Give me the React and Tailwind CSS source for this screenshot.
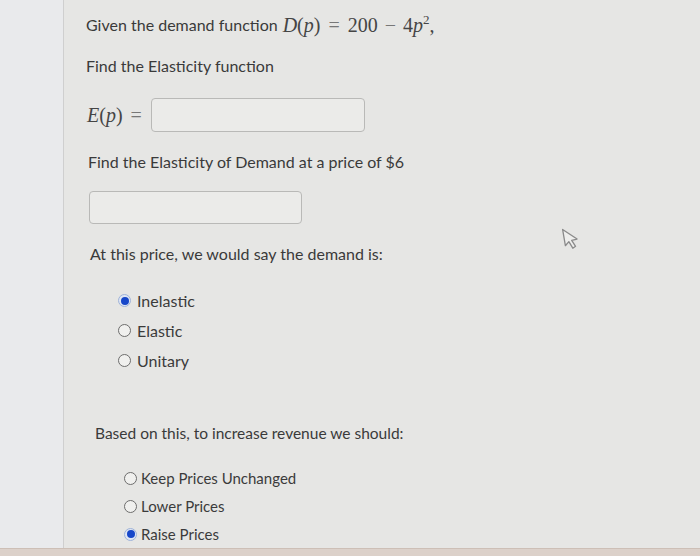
const sans = { fontFamily: 'Lato, "Open Sans", sans-serif' }

function Radio({ checked }) {
  if (checked) {
    return (
      <span className="w-[13px] h-[13px] rounded-full border border-[#9fb3d9] bg-[#dfe6f3] flex items-center justify-center shrink-0">
        <span className="w-[8px] h-[8px] rounded-full bg-[#1747c9]" />
      </span>
    )
  }
  return <span className="w-[13px] h-[13px] rounded-full border-[1.5px] border-[#6d6d6d] bg-[#f0f0ee] shrink-0" />
}

function Option({ checked, label, className }) {
  return (
    <div className={`flex items-center ${className}`}>
      <Radio checked={checked} />
      <span className="text-[#3b3b3b]">{label}</span>
    </div>
  )
}

function M({ children }) {
  return <span className="font-['Liberation_Serif',serif] italic">{children}</span>
}

function N({ children, className = '' }) {
  return <span className={`font-['Liberation_Serif',serif] ${className}`}>{children}</span>
}

export default function App() {
  return (
    <div className="w-[700px] h-[556px] flex flex-col bg-[#e6e6e4] overflow-hidden relative" style={sans}>
      <div className="flex flex-1 min-h-0">
        <div className="w-[64px] bg-[#e9eaec] border-r border-[#cfcfcf]" />
        <div className="flex-1 flex flex-col pl-[22px] text-[#3a3a3a] overflow-hidden">
          <div className="mt-[13px] h-[24px] flex items-center text-[16px]">
            <span className="mr-[5px]">Given the demand function</span>
            <span className="text-[20px] text-[#454545] flex items-baseline">
              <M>D</M><N>(</N><M>p</M><N>)</N>
              <N className="mx-[8px] text-[#777]">=</N>
              <N>200</N>
              <N className="mx-[7px] text-[#777]">−</N>
              <N>4</N><M>p</M>
              <sup className="text-[13px] font-['Liberation_Serif',serif] -top-[8px]">2</sup>
              <N>,</N>
            </span>
          </div>
          <div className="mt-[17px] h-[24px] flex items-center text-[16px]">Find the Elasticity function</div>
          <div className="mt-[20px] flex items-center ml-[1px] h-[34px]">
            <span className="text-[20px] text-[#454545] w-[64px] flex items-baseline">
              <M>E</M><N>(</N><M>p</M><N>)</N><N className="ml-[8px] text-[#777]">=</N>
            </span>
            <div className="w-[214px] h-[34px] rounded-[4px] border-[1.5px] border-[#b9b9b7] bg-[#ebebe9]" />
          </div>
          <div className="mt-[18px] h-[24px] flex items-center text-[16px] ml-[2px]">Find the Elasticity of Demand at a price of $6</div>
          <div className="mt-[17px] ml-[3px] w-[213px] h-[34px] rounded-[4px] border-[1.5px] border-[#b9b9b7] bg-[#ebebe9]" />
          <div className="mt-[18px] h-[24px] flex items-center text-[16px] ml-[4px]">At this price, we would say the demand is:</div>
          <div className="mt-[20px] flex flex-col ml-[32px] text-[16px]">
            <Option className="h-[30px] gap-[6px]" checked label="Inelastic" />
            <Option className="h-[30px] gap-[6px]" label="Elastic" />
            <Option className="h-[30px] gap-[6px]" label="Unitary" />
          </div>
          <div className="mt-[46px] h-[24px] flex items-center text-[15.5px] ml-[9px]">Based on this, to increase revenue we should:</div>
          <div className="mt-[19px] flex flex-col ml-[38px] text-[15px]">
            <Option className="h-[28px] gap-[4px]" label="Keep Prices Unchanged" />
            <Option className="h-[28px] gap-[4px]" label="Lower Prices" />
            <Option className="h-[28px] gap-[4px]" checked label="Raise Prices" />
          </div>
        </div>
      </div>
      <div className="h-[8px] bg-[#dcd1ca] border-t border-[#cdbfb6]" />
      <svg className="absolute left-[562px] top-[227px]" width="22" height="26" viewBox="0 0 22 26">
        <path
          d="M2 1.5 L2.5 18 L6.5 14.5 L9.5 21.5 L12.5 20 L9.5 13.5 L15 13 Z"
          fill="#eeeeec"
          stroke="#8a8a8a"
          strokeWidth="1.3"
          strokeLinejoin="round"
          transform="rotate(-8 8 12)"
        />
      </svg>
    </div>
  )
}
